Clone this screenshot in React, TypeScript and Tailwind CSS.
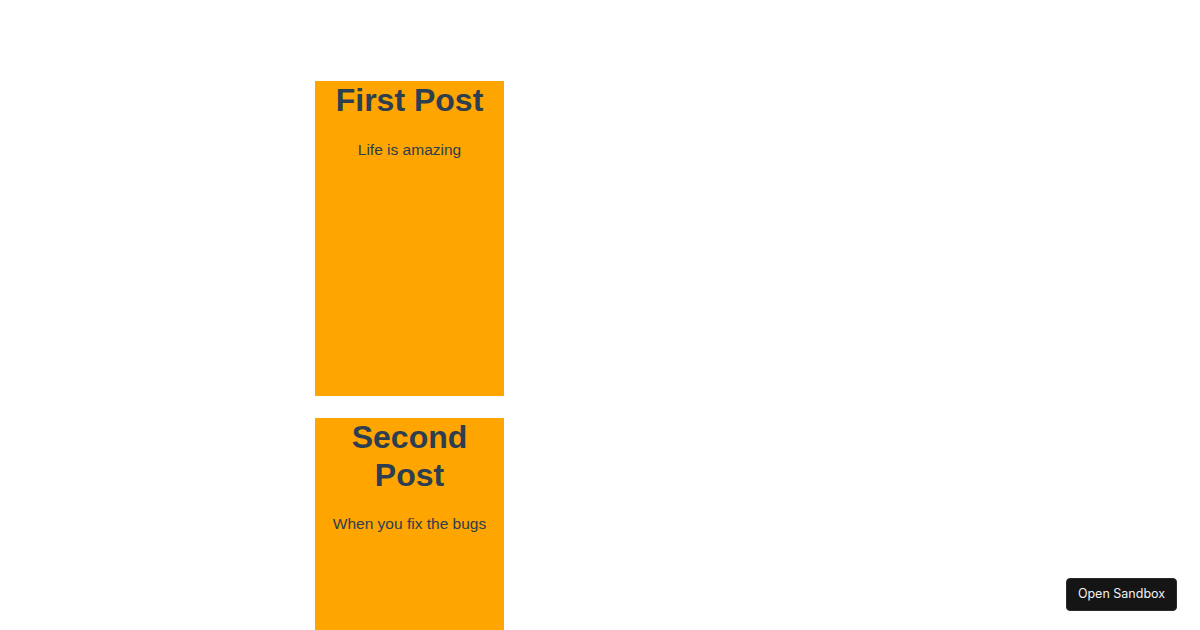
export default function App() {
  return (
    <div className="relative h-[630px] w-[1200px] overflow-hidden bg-white font-['Liberation_Sans',Arial,sans-serif] text-[#2c3e50]">
      <div className="ml-[315px] pt-[81px]">
        <div className="flex h-[315px] w-[189px] flex-col items-center bg-[#ffa500] text-center">
          <h1 className="text-[32px] font-bold leading-[38px]">First Post</h1>
          <p className="mt-[22px] text-[15.5px] leading-[18px]">Life is amazing</p>
        </div>
        <div className="mt-[22px] flex h-[300px] w-[189px] flex-col items-center bg-[#ffa500] text-center">
          <h1 className="text-[32px] font-bold leading-[38px]">Second Post</h1>
          <p className="mt-[21px] text-[15.5px] leading-[18px]">When you fix the bugs</p>
        </div>
      </div>
      <button className="absolute left-[1066px] top-[578px] flex h-[33px] w-[111px] items-center justify-center rounded-[4px] border border-[#2a2a2a] bg-[#151515] font-['Inter',sans-serif] text-[12.5px] text-[#f2f2f2]">
        Open Sandbox
      </button>
    </div>
  );
}
